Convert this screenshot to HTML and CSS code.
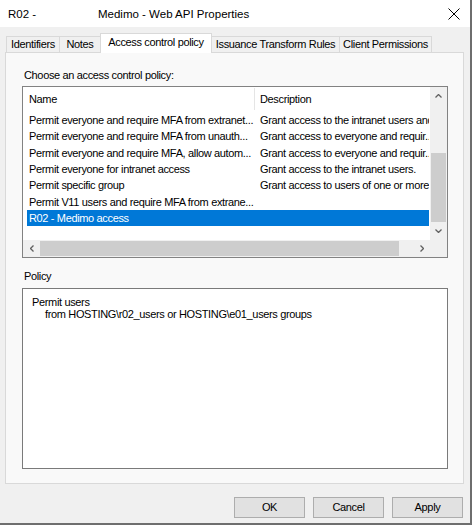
FILE: index.html
```html
<!DOCTYPE html>
<html>
<head>
<meta charset="utf-8">
<title>Medimo - Web API Properties</title>
<link rel="stylesheet" href="styles.css">
</head>
<body>
<div class="window">
  <div class="titlebar">
    <span class="title-a">R02 -</span>
    <span class="title-b">Medimo - Web API Properties</span>
    <svg class="close" width="12" height="12" viewBox="0 0 12 12"><path d="M0.5 0.5 L11.5 11.5 M11.5 0.5 L0.5 11.5" stroke="#000" stroke-width="1" fill="none"/></svg>
  </div>
  <div class="client">
    <div class="tabs">
      <div class="tab tab-ident">Identifiers</div>
      <div class="tab tab-notes">Notes</div>
      <div class="tab tab-access selected">Access control policy</div>
      <div class="tab tab-issue">Issuance Transform Rules</div>
      <div class="tab tab-client">Client Permissions</div>
    </div>
    <div class="panel">
      <div class="label">Choose an access control policy:</div>
      <div class="list">
        <div class="list-main">
          <div class="list-view">
            <div class="hdr">
              <div class="hdr-name">Name</div>
              <div class="hdr-desc">Description</div>
            </div>
            <div class="row"><div class="c-name">Permit everyone and require MFA from extranet...</div><div class="c-desc">Grant access to the intranet users and require MFA</div></div>
            <div class="row"><div class="c-name">Permit everyone and require MFA from unauth...</div><div class="c-desc">Grant access to everyone and requir...</div></div>
            <div class="row"><div class="c-name">Permit everyone and require MFA, allow autom...</div><div class="c-desc">Grant access to everyone and requir...</div></div>
            <div class="row"><div class="c-name">Permit everyone for intranet access</div><div class="c-desc">Grant access to the intranet users.</div></div>
            <div class="row"><div class="c-name">Permit specific group</div><div class="c-desc">Grant access to users of one or more</div></div>
            <div class="row"><div class="c-name">Permit V11 users and require MFA from extrane...</div><div class="c-desc"></div></div>
            <div class="row sel"><div class="c-name">R02 - Medimo access</div><div class="c-desc"></div></div>
          </div>
          <div class="vscroll">
            <div class="sb-btn"><svg width="7" height="4" viewBox="0 0 7 4"><path d="M0.5 3.5 L3.5 0.5 L6.5 3.5" fill="none" stroke="#606060" stroke-width="1.3"/></svg></div>
            <div class="vtrack-top"></div>
            <div class="vthumb"></div>
            <div class="sb-btn"><svg width="7" height="4" viewBox="0 0 7 4"><path d="M0.5 0.5 L3.5 3.5 L6.5 0.5" fill="none" stroke="#606060" stroke-width="1.3"/></svg></div>
            <div class="vtrack-bot"></div>
          </div>
        </div>
        <div class="hrow">
          <div class="hscroll">
            <div class="sb-btn"><svg width="4" height="7" viewBox="0 0 4 7"><path d="M3.5 0.5 L0.5 3.5 L3.5 6.5" fill="none" stroke="#606060" stroke-width="1.3"/></svg></div>
            <div class="hthumb"></div>
            <div class="htrack"></div>
            <div class="sb-btn"><svg width="4" height="7" viewBox="0 0 4 7"><path d="M0.5 0.5 L3.5 3.5 L0.5 6.5" fill="none" stroke="#606060" stroke-width="1.3"/></svg></div>
          </div>
          <div class="corner"></div>
        </div>
      </div>
      <div class="label label-policy">Policy</div>
      <div class="policy">
        <div>Permit users</div>
        <div class="indent">from HOSTING\r02_users or HOSTING\e01_users groups</div>
      </div>
    </div>
    <div class="buttons">
      <div class="btn">OK</div>
      <div class="btn">Cancel</div>
      <div class="btn">Apply</div>
    </div>
  </div>
</div>
</body>
</html>
```

FILE: styles.css
```css
html, body {
  margin: 0;
  padding: 0;
  background: #ffffff;
}

.window {
  width: 472px;
  height: 525px;
  box-sizing: border-box;
  border-right: 2px solid #6e6e6e;
  border-bottom: 2px solid #6e6e6e;
  background: #f0f0f0;
  font-family: "Liberation Sans", Arial, sans-serif;
  font-size: 11px;
  letter-spacing: -0.35px;
  color: #000;
  overflow: hidden;
}

.titlebar {
  height: 27px;
  background: #ffffff;
  display: flex;
  align-items: center;
  padding-left: 8px;
  font-size: 11.5px;
  letter-spacing: 0;
}

.title-a {
  width: 90px;
}

.close {
  margin-left: auto;
  margin-right: 10px;
}

.client {
  padding: 6px 0 0 5px;
}

.tabs {
  height: 19px;
  display: flex;
  align-items: flex-end;
  padding-left: 1px;
}

.tab {
  height: 16px;
  box-sizing: border-box;
  border: 1px solid #d9d9d9;
  border-bottom: none;
  margin-left: -1px;
  background: #f0f0f0;
  text-align: center;
  line-height: 15px;
}

.tab:first-child {
  margin-left: 0;
}

.tab-ident { width: 54px; }
.tab-notes { width: 42px; }
.tab-access { width: 112px; }
.tab-issue { width: 129px; }
.tab-client { width: 93px; }

.tab.selected {
  height: 20px;
  margin-bottom: -1px;
  background: #ffffff;
  position: relative;
  z-index: 1;
  line-height: 17px;
}

.panel {
  width: 459px;
  height: 432px;
  box-sizing: border-box;
  border: 1px solid #d9d9d9;
  background: #f9f9f9;
  padding: 15px 0 0 16px;
}

.label {
  line-height: 14px;
  height: 14px;
  padding-left: 2px;
}

.list {
  margin-top: 4px;
  width: 426px;
  height: 172px;
  box-sizing: border-box;
  border: 1px solid #828282;
  background: #ffffff;
  display: flex;
  flex-direction: column;
}

.list-main {
  height: 153px;
  display: flex;
}

.list-view {
  width: 407px;
  overflow: hidden;
}

.hdr {
  height: 25px;
  display: flex;
  line-height: 25px;
}

.hdr-name {
  width: 232px;
  box-sizing: border-box;
  border-right: 1px solid #e5e5e5;
  padding-left: 6px;
  margin: 1px 0 2px 0;
  line-height: 22px;
}

.hdr-desc {
  padding-left: 5px;
}

.row {
  height: 16.33px;
  line-height: 16.33px;
  margin-left: 4px;
  width: 402px;
  display: flex;
  white-space: nowrap;
  overflow: hidden;
}

.row.sel {
  background: #0078d7;
  color: #ffffff;
}

.c-name {
  width: 227px;
  flex: none;
  padding-left: 2px;
  box-sizing: border-box;
  overflow: hidden;
}

.c-desc {
  padding-left: 6px;
  overflow: hidden;
}

.vscroll {
  width: 17px;
  background: #f0f0f0;
  display: flex;
  flex-direction: column;
}

.sb-btn {
  width: 17px;
  height: 17px;
  flex: none;
  display: flex;
  align-items: center;
  justify-content: center;
}

.vtrack-top {
  height: 49px;
}

.vthumb {
  height: 69px;
  margin: 0 1px;
  background: #cdcdcd;
}

.vtrack-bot {
  flex: 1;
}

.hrow {
  height: 17px;
  display: flex;
}

.hscroll {
  width: 407px;
  display: flex;
  background: #f0f0f0;
}

.hthumb {
  width: 359px;
  margin: 1px 0;
  background: #cdcdcd;
}

.htrack {
  flex: 1;
}

.corner {
  width: 17px;
  background: #f0f0f0;
}

.label-policy {
  margin-top: 11px;
}

.policy {
  margin-top: 5px;
  width: 426px;
  height: 181px;
  box-sizing: border-box;
  border: 1px solid #7a7a7a;
  background: #ffffff;
  padding: 7px 0 0 9px;
  line-height: 12px;
}

.indent {
  padding-left: 13px;
}

.buttons {
  margin-top: 13px;
  display: flex;
  justify-content: flex-end;
  gap: 8px;
  padding-right: 7px;
}

.btn {
  width: 71px;
  height: 21px;
  box-sizing: border-box;
  border: 1px solid #adadad;
  background: #e1e1e1;
  text-align: center;
  line-height: 19px;
}
```
